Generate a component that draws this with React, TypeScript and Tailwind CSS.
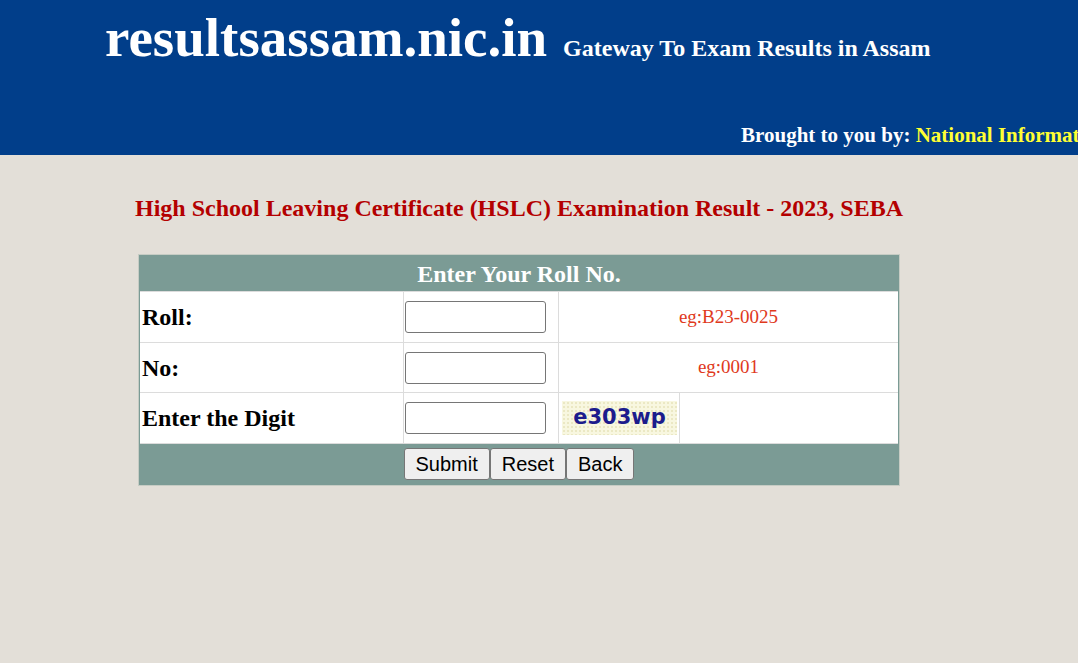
export default function App() {
  return (
    <div className="min-h-screen bg-[#e3dfd8] font-['Liberation_Serif',serif]">
      <header className="h-[155px] overflow-hidden bg-[#013e8a]">
        <div className="flex items-baseline pl-[105px] pt-[10px]">
          <span className="text-[55px] font-bold leading-none text-white">resultsassam.nic.in</span>
          <span className="ml-[16px] text-[24px] font-bold leading-none text-white">
            Gateway To Exam Results in Assam
          </span>
        </div>
        {/* scrolling credit line, clipped at the right edge like the marquee */}
        <div className="mt-[60px] whitespace-nowrap pl-[741px] text-[21px] font-bold leading-none text-white">
          Brought to you by: <span className="text-[#ffff33]">National Informatics Centre, Assam State Centre</span>
        </div>
      </header>

      <h1 className="mt-[41px] pl-[135px] text-[24px] font-bold leading-none text-[#b40000]">
        High School Leaving Certificate (HSLC) Examination Result - 2023, SEBA
      </h1>

      <div className="ml-[138px] mt-[34px] w-[762px] border border-[#c6ccc4]">
        <div className="border border-[#7b9b95]">
          <div className="grid grid-cols-[263px_154px_120px_1fr] gap-px bg-[#dcdcdc]">
            <div className="col-span-4 flex h-[35px] items-center justify-center bg-[#7b9b95] text-[24px] font-bold text-white">
              Enter Your Roll No.
            </div>

            <div className="flex h-[50px] items-center bg-white pl-[2px] text-[24px] font-bold text-black">Roll:</div>
            <div className="flex items-center bg-white pl-[1px]">
              <input className="h-[32px] w-[141px] rounded-[3px] border border-[#767676] bg-white" />
            </div>
            <div className="col-span-2 flex items-center justify-center bg-white text-[19px] text-[#e0391c]">
              eg:B23-0025
            </div>

            <div className="flex h-[49px] items-center bg-white pl-[2px] text-[24px] font-bold text-black">No:</div>
            <div className="flex items-center bg-white pl-[1px]">
              <input className="h-[32px] w-[141px] rounded-[3px] border border-[#767676] bg-white" />
            </div>
            <div className="col-span-2 flex items-center justify-center bg-white text-[19px] text-[#e0391c]">
              eg:0001
            </div>

            <div className="flex h-[50px] items-center bg-white pl-[2px] text-[24px] font-bold text-black">
              Enter the Digit
            </div>
            <div className="flex items-center bg-white pl-[1px]">
              <input className="h-[32px] w-[141px] rounded-[3px] border border-[#767676] bg-white" />
            </div>
            <div className="flex items-center bg-white pl-[3px]">
              <div className="flex h-[34px] w-[115px] items-center justify-center bg-[#f8f7e0] bg-[radial-gradient(#ebe8c4_1px,transparent_1px)] bg-[length:4px_4px] font-['DejaVu_Sans',sans-serif] text-[21px] font-bold text-[#1c1c8c]">
                e303wp
              </div>
            </div>
            <div className="bg-white" />

            <div className="col-span-4 flex h-[40px] items-center justify-center bg-[#7b9b95] font-['Liberation_Sans',sans-serif] text-[20px] text-black">
              <button className="h-[32px] rounded-[3px] border border-[#767676] bg-[#efefef] px-[11px]">Submit</button>
              <button className="h-[32px] rounded-[3px] border border-[#767676] bg-[#efefef] px-[11px]">Reset</button>
              <button className="h-[32px] rounded-[3px] border border-[#767676] bg-[#efefef] px-[11px]">Back</button>
            </div>
          </div>
        </div>
      </div>
    </div>
  );
}
